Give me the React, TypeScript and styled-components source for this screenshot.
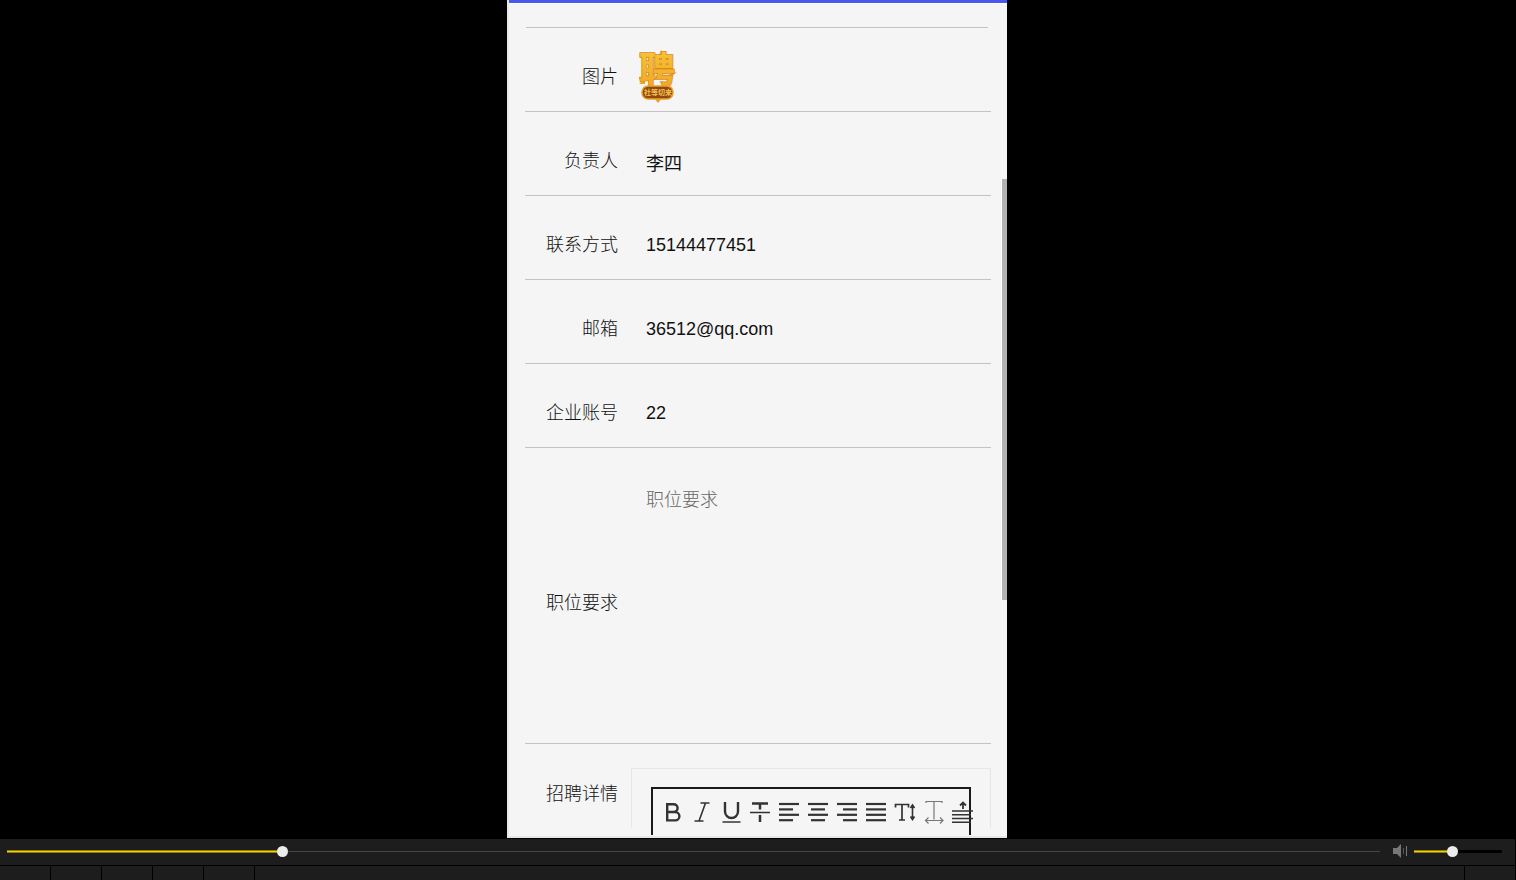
import React, { useState } from 'react';
import styled, { createGlobalStyle } from 'styled-components';

const GlobalStyle = createGlobalStyle`
  *, *::before, *::after { box-sizing: border-box; }
  body {
    margin: 0;
    background: #000;
    font-family: "Liberation Sans", "Noto Sans CJK SC", sans-serif;
  }
`;

const Player = styled.div`
  display: flex;
  flex-direction: column;
  height: 100vh;
  background: #000;
`;

const Stage = styled.main`
  flex: 1;
  min-height: 0;
  display: flex;
  justify-content: center;
  padding: 0 2px 1px 0;
`;

const Phone = styled.section`
  position: relative;
  width: 100%;
  max-width: 500px;
  overflow: hidden;
  background: #f5f5f5;
  border-left: 2px solid #e9e9e9;
  border-bottom: 2px solid #e6e6e6;
`;

const TopBar = styled.div`
  height: 4px;
  background: #4a58f0;
  border-bottom: 1px solid #fff;
`;

const ScrollThumb = styled.div`
  position: absolute;
  top: 179px;
  right: 0;
  width: 6px;
  height: 421px;
  background: #b1b1b1;
  border-left: 1px solid #fff;
`;

const Form = styled.form`
  padding: 0 16px;
`;

const FormHead = styled.div`
  height: 24px;
  margin: 0 3px 0 1px;
  border-bottom: 1px solid #c3c3c3;
`;

const Row = styled.div<{ $tall?: boolean }>`
  display: flex;
  align-items: center;
  min-height: ${(p) => (p.$tall ? 296 : 84)}px;
  padding-top: 14px;
  border-bottom: 1px solid #c3c3c3;
`;

const EditorRow = styled.div`
  display: flex;
  align-items: flex-start;
  padding-top: 24px;
`;

const Label = styled.label`
  flex: none;
  width: 93px;
  font-size: 18px;
  font-weight: 300;
  line-height: 24px;
  text-align: right;
  color: #111;
`;

const EditorLabel = styled(Label)`
  margin: 14px 13px 0 0;
`;

const Input = styled.input`
  flex: 1;
  min-width: 0;
  height: 40px;
  margin-left: 13px;
  padding: 2px 15px 0;
  border: 0;
  outline: 0;
  background: transparent;
  font: 18px/24px "Liberation Sans", "Noto Sans CJK SC", sans-serif;
  color: #111;
`;

const TextArea = styled.textarea`
  flex: 1;
  min-width: 0;
  height: 240px;
  margin-left: 13px;
  padding: 5px 15px;
  border: 0;
  outline: 0;
  resize: none;
  background: transparent;
  font: 300 18px/24px "Liberation Sans", "Noto Sans CJK SC", sans-serif;
  color: #111;
  &::placeholder { color: #666; }
`;

const Picture = styled.svg`
  width: 40px;
  height: 54px;
  margin-left: 20px;
  overflow: visible;
`;

const Editor = styled.div`
  flex: 1;
  min-width: 0;
  height: 60px;
  padding: 18px 19px 0;
  border: 1px solid #e6e6e6;
  border-bottom: 0;
`;

const Toolbar = styled.div`
  display: flex;
  align-items: flex-start;
  height: 48px;
  padding: 9px 0 0 6px;
  border: 2px solid #1a1a1a;
  border-width: 2px 2px 0 2px;
`;

const Tool = styled.button`
  flex: none;
  width: 29px;
  height: 28px;
  padding: 0 2px;
  border: 0;
  background: transparent;
  color: #333;
  svg { display: block; width: 24px; height: 28px; overflow: visible; }
`;

const Controls = styled.div`
  display: flex;
  align-items: center;
  height: 26px;
  padding: 0 13px 2px 7px;
  border-right: 1px solid #000;
  background: #1d1d1d;
`;

const Slider = styled.input<{ $rest: string; $thin?: boolean }>`
  appearance: none;
  display: block;
  height: 12px;
  margin: 0;
  background: transparent;
  outline: 0;
  &::-webkit-slider-runnable-track {
    height: 3px;
    background:
      linear-gradient(#8f7e0c 1px, #f2d500 1px, #f2d500 2px, #8f7e0c 2px) left / var(--fill) 3px no-repeat,
      linear-gradient(${(p) => p.$rest}, ${(p) => p.$rest}) center / 100% ${(p) => (p.$thin ? 1 : 3)}px no-repeat;
  }
  &::-webkit-slider-thumb {
    appearance: none;
    width: 11px;
    height: 11px;
    margin-top: -4px;
    border-radius: 50%;
    background: #ececec;
  }
`;

const SeekSlider = styled(Slider)`
  flex: 1;
  min-width: 0;
`;

const VolumeSlider = styled(Slider)`
  flex: none;
  width: 88px;
`;

const MuteButton = styled.button`
  display: block;
  width: 16px;
  height: 16px;
  margin: 0 6px 0 12px;
  padding: 0;
  border: 0;
  background: transparent;
  svg { display: block; }
`;

const Deck = styled.div`
  display: flex;
  height: 15px;
  border-top: 1px solid #000;
  border-right: 1px solid #000;
  background: #1d1d1d;
`;

const Cell = styled.div<{ $last?: boolean }>`
  width: 51px;
  border-right: ${(p) => (p.$last ? 0 : 1)}px solid #000;
  border-left: ${(p) => (p.$last ? 1 : 0)}px solid #000;
  margin-left: ${(p) => (p.$last ? 'auto' : 0)};
`;

const fields = [
  { id: 'owner', label: '负责人', value: '李四' },
  { id: 'contact', label: '联系方式', value: '15144477451' },
  { id: 'email', label: '邮箱', value: '36512@qq.com' },
  { id: 'account', label: '企业账号', value: '22' },
];

const bars = (spans: number[][]) => (
  <g stroke="currentColor" strokeWidth="2.2">
    {spans.map(([a, b], i) => (
      <path key={i} d={`M${a} ${6 + i * 5.4}H${b}`} />
    ))}
  </g>
);

const tools = [
  {
    name: '加粗',
    icon: <path d="M6.200 6.200h6.500a3.900 3.900 0 0 1 0 7.800H6.200zM6.200 14h8a4.200 4.200 0 0 1 0 8.400h-8z" fill="none" stroke="currentColor" strokeWidth="2.400" />,
  },
  {
    name: '斜体',
    icon: <path d="M10.500 5h9M4.500 23h9M15.500 5L9 23" fill="none" stroke="currentColor" strokeWidth="1.600" />,
  },
  {
    name: '下划线',
    icon: (
      <g fill="none" stroke="currentColor">
        <path d="M6 4v9.500a6.500 6.500 0 0 0 13 0V4" strokeWidth="2.400" />
        <path d="M3.500 24h18" strokeWidth="1.500" />
      </g>
    ),
  },
  {
    name: '删除线',
    icon: (
      <g stroke="currentColor">
        <path d="M4 5.500h16M12 5.500v6M12 17v7" strokeWidth="2.500" />
        <path d="M2 14.500h20" strokeWidth="1.500" />
      </g>
    ),
  },
  { name: '左对齐', icon: bars([[2, 22], [2, 16], [2, 22], [2, 16]]) },
  { name: '居中', icon: bars([[2, 22], [5, 19], [2, 22], [5, 19]]) },
  { name: '右对齐', icon: bars([[2, 22], [8, 22], [2, 22], [8, 22]]) },
  { name: '两端对齐', icon: bars([[2, 22], [2, 22], [2, 22], [2, 22]]) },
  {
    name: '行高',
    icon: (
      <g fill="none" stroke="currentColor">
        <path d="M2.500 9.500V6.500h13v3M9 6.500V21.500M6 22h6" strokeWidth="1.700" />
        <path d="M19.500 8v13M17.500 10l2-3 2 3M17.500 18.500l2 3 2-3" strokeWidth="1.600" />
      </g>
    ),
  },
  {
    name: '字间距',
    icon: (
      <path d="M4 5V3.500h16V5M12 3.500v18M4 22.500h17M6.500 19.500l-3 3 3 3M18 19.500l3 3-3 3" fill="none" stroke="#777" strokeWidth="1.200" />
    ),
  },
  {
    name: '段前距',
    icon: (
      <g fill="none" stroke="currentColor">
        <path d="M1 13h21M1 16.800h19M1 20.500h21M1 24.200h19" strokeWidth="1.500" />
        <path d="M12 11V4.500M9 7.500l3-3 3 3" strokeWidth="1.800" />
      </g>
    ),
  },
];

function HiringBadge() {
  return (
    <Picture viewBox="0 0 40 54" role="img" aria-label="招聘图片">
      <defs>
        <linearGradient id="gold" x1="0" y1="0" x2="0" y2="1">
          <stop offset="0" stopColor="#f8c93e" />
          <stop offset="1" stopColor="#f0a420" />
        </linearGradient>
      </defs>
      <path d="M21 5l2-5 4 5zM1 34l6-5v5zM31 24l8-2-6 5z" fill="#eaa829" />
      <text
        x="1"
        y="33"
        fontSize="36"
        fontWeight="700"
        fontFamily="Noto Sans CJK SC, sans-serif"
        fill="url(#gold)"
        stroke="#d98a1a"
        strokeWidth="1.600"
        paintOrder="stroke"
      >
        聘
      </text>
      <path d="M16 48h8l-4 5z" fill="#e5a02d" />
      <rect x="4" y="36" width="31" height="13" rx="6" fill="#92480f" stroke="#e9a22b" strokeWidth="1.500" />
      <text x="20" y="45" textAnchor="middle" fontSize="7" fontWeight="700" fontFamily="Noto Sans CJK SC, sans-serif" fill="#f4c355">
        社等切来
      </text>
    </Picture>
  );
}

const fillStyle = (value: number) => ({ '--fill': `${value}%` }) as React.CSSProperties;

export default function App() {
  const [position, setPosition] = useState(19.8);
  const [volume, setVolume] = useState(43.5);

  return (
    <>
      <GlobalStyle />
      <Player>
        <Stage>
          <Phone>
            <TopBar />
            <Form>
              <FormHead />
              <Row>
                <Label as="span">图片</Label>
                <HiringBadge />
              </Row>
              {fields.map((f) => (
                <Row key={f.id}>
                  <Label htmlFor={f.id}>{f.label}</Label>
                  <Input id={f.id} defaultValue={f.value} />
                </Row>
              ))}
              <Row $tall>
                <Label htmlFor="requirements">职位要求</Label>
                <TextArea id="requirements" placeholder="职位要求" />
              </Row>
              <EditorRow>
                <EditorLabel as="span">招聘详情</EditorLabel>
                <Editor>
                  <Toolbar role="toolbar" aria-label="招聘详情">
                    {tools.map((t) => (
                      <Tool key={t.name} type="button" aria-label={t.name}>
                        <svg viewBox="0 0 24 28">{t.icon}</svg>
                      </Tool>
                    ))}
                  </Toolbar>
                </Editor>
              </EditorRow>
            </Form>
            <ScrollThumb />
          </Phone>
        </Stage>
        <Controls>
          <SeekSlider
            type="range"
            min="0"
            max="100"
            step="0.1"
            aria-label="播放进度"
            value={position}
            onChange={(e) => setPosition(Number(e.target.value))}
            style={fillStyle(position)}
            $rest="#444"
            $thin
          />
          <MuteButton type="button" aria-label="静音">
            <svg width="16" height="16" viewBox="0 0 16 16">
              <path d="M1 5h4l4-4v14l-4-4H1z" fill="#777" />
              <path d="M11.500 5v6" stroke="#555" />
              <path d="M14.500 3v10" stroke="#777" />
            </svg>
          </MuteButton>
          <VolumeSlider
            type="range"
            min="0"
            max="100"
            step="0.5"
            aria-label="音量"
            value={volume}
            onChange={(e) => setVolume(Number(e.target.value))}
            style={fillStyle(volume)}
            $rest="#000"
          />
        </Controls>
        <Deck>
          <Cell />
          <Cell />
          <Cell />
          <Cell />
          <Cell />
          <Cell $last />
        </Deck>
      </Player>
    </>
  );
}
